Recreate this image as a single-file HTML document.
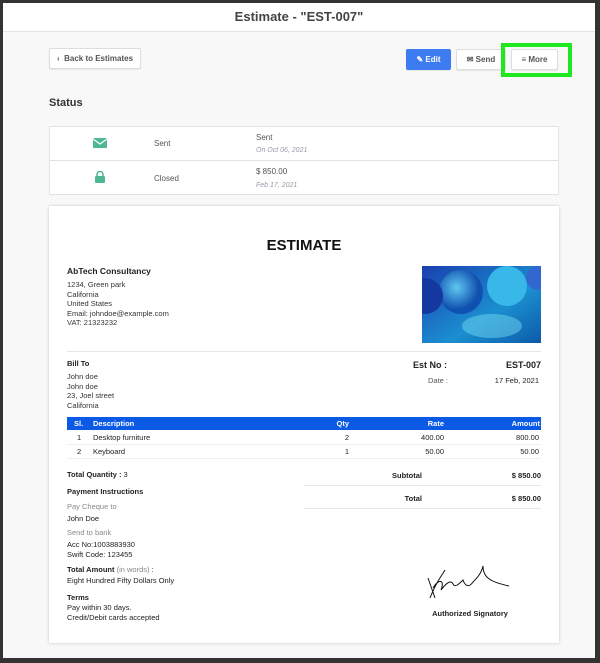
<!DOCTYPE html>
<html><head><style>
*{margin:0;padding:0;box-sizing:border-box}
body{width:600px;height:663px;background:#333;position:relative;overflow:hidden;font-family:"Liberation Sans",sans-serif;color:#222}
.a{position:absolute}
#page{left:3px;top:3px;width:592px;height:655px;background:#f8f8f8}
#hdr{left:3px;top:3px;width:592px;height:29px;background:#fff;border-bottom:1px solid #e2e2e2;text-align:center;font-size:13px;font-weight:bold;color:#444;line-height:27px}
.btn{background:#fff;border:1px solid #ddd;border-radius:2px;font-size:8px;font-weight:bold;color:#555;text-align:center;line-height:19px;box-shadow:0 1px 1px rgba(0,0,0,.08)}
.t{font-size:7.5px;white-space:nowrap}
.b{font-weight:bold}
.g{color:#888}
</style></head><body>
<div class="a" id="page"></div>
<div class="a" id="hdr">Estimate - "EST-007"</div>
<div class="a btn" style="left:49px;top:48px;width:92px;height:21px">&#8249;&nbsp; Back to Estimates</div>
<div class="a btn" style="left:406px;top:49px;width:45px;height:21px;background:#3d7bf0;border-color:#3d7bf0;color:#fff">&#9998; Edit</div>
<div class="a btn" style="left:456px;top:49px;width:50px;height:21px">&#9993; Send</div>
<div class="a" style="left:501px;top:43px;width:71px;height:34px;border:4px solid #1ee81e"></div>
<div class="a btn" style="left:511px;top:49px;width:47px;height:21px">&#8801; More</div>
<div class="a b" style="left:49px;top:97px;font-size:11px;color:#333">Status</div>
<div class="a" style="left:49px;top:126px;width:510px;height:69px;background:#fff;border:1px solid #e2e2e2"></div>
<div class="a" style="left:49px;top:160px;width:510px;height:1px;background:#e2e2e2"></div>
<svg class="a" style="left:93px;top:138px" width="14" height="10"><rect width="14" height="10" rx="1" fill="#4db891"/><path d="M0 1 L7 6 L14 1" stroke="#fff" stroke-width="1.2" fill="none"/></svg>
<svg class="a" style="left:95px;top:171px" width="10" height="12"><path d="M2 5 V3.5 a3 3 0 0 1 6 0 V5" stroke="#4db891" stroke-width="1.5" fill="none"/><rect y="5" width="10" height="7" rx="1" fill="#4db891"/></svg>
<div class="a t" style="left:154px;top:139px;color:#555;font-size:8px">Sent</div>
<div class="a t" style="left:154px;top:174px;color:#555;font-size:8px">Closed</div>
<div class="a t" style="left:256px;top:133px;color:#555;font-size:8px">Sent</div>
<div class="a t" style="left:256px;top:147px;color:#99a;font-style:italic;font-size:7px">On Oct 06, 2021</div>
<div class="a t" style="left:256px;top:167px;color:#555;font-size:8px">$ 850.00</div>
<div class="a t" style="left:256px;top:182px;color:#99a;font-style:italic;font-size:7px">Feb 17, 2021</div>

<div class="a" style="left:49px;top:206px;width:510px;height:437px;background:#fff;box-shadow:0 0 3px rgba(0,0,0,.2)"></div>
<div class="a b" style="left:49px;top:237px;width:510px;text-align:center;font-size:15px;color:#111">ESTIMATE</div>
<div class="a t b" style="left:67px;top:266px;font-size:8.5px">AbTech Consultancy</div>
<div class="a t" style="left:67px;top:280px;line-height:9.5px;color:#333">1234, Green park<br>California<br>United States<br>Email: johndoe@example.com<br>VAT: 21323232</div>
<svg class="a" style="left:422px;top:266px" width="119" height="77"><defs><radialGradient id="b1" cx=".4" cy=".4"><stop offset="0" stop-color="#5fc8f0"/><stop offset="1" stop-color="#1050b0"/></radialGradient><linearGradient id="bg" x1="0" y1="0" x2="1" y2="1"><stop offset="0" stop-color="#1a3fb0"/><stop offset=".6" stop-color="#1b8fd0"/><stop offset="1" stop-color="#0d5aa8"/></linearGradient></defs><rect width="119" height="77" fill="url(#bg)"/><ellipse cx="70" cy="60" rx="30" ry="12" fill="#6fd6f0" opacity=".5"/><circle cx="39" cy="26" r="22" fill="url(#b1)"/><circle cx="85" cy="20" r="20" fill="#38b8e8"/><circle cx="116" cy="12" r="12" fill="#3068d0"/><circle cx="3" cy="30" r="18" fill="#1438a0"/></svg>
<div class="a" style="left:67px;top:351px;width:474px;height:1px;background:#e6e6e6"></div>
<div class="a t b" style="left:67px;top:359px">Bill To</div>
<div class="a t" style="left:67px;top:372px;line-height:9.5px;color:#333">John doe<br>John doe<br>23, Joel street<br>California</div>
<div class="a t b" style="left:413px;top:360px;font-size:9px">Est No :</div>
<div class="a t b" style="left:450px;top:360px;width:91px;font-size:9px;text-align:right">EST-007</div>
<div class="a t" style="left:428px;top:376px;color:#555">Date :</div>
<div class="a t" style="left:450px;top:376px;width:89px;text-align:right">17 Feb, 2021</div>
<div class="a" style="left:67px;top:417px;width:474px;height:13px;background:#0a5ae6"></div>
<div class="a t b" style="left:74px;top:419px;color:#fff">Sl.</div>
<div class="a t b" style="left:93px;top:419px;color:#fff">Description</div>
<div class="a t b" style="left:300px;top:419px;width:49px;text-align:right;color:#fff">Qty</div>
<div class="a t b" style="left:380px;top:419px;width:64px;text-align:right;color:#fff">Rate</div>
<div class="a t b" style="left:480px;top:419px;width:60px;text-align:right;color:#fff">Amount</div>
<div class="a t" style="left:77px;top:433px">1</div><div class="a t" style="left:93px;top:433px">Desktop furniture</div>
<div class="a t" style="left:300px;top:433px;width:49px;text-align:right">2</div>
<div class="a t" style="left:380px;top:433px;width:64px;text-align:right">400.00</div>
<div class="a t" style="left:480px;top:433px;width:59px;text-align:right">800.00</div>
<div class="a" style="left:67px;top:444px;width:474px;height:1px;background:#eee"></div>
<div class="a t" style="left:77px;top:447px">2</div><div class="a t" style="left:93px;top:447px">Keyboard</div>
<div class="a t" style="left:300px;top:447px;width:49px;text-align:right">1</div>
<div class="a t" style="left:380px;top:447px;width:64px;text-align:right">50.00</div>
<div class="a t" style="left:480px;top:447px;width:59px;text-align:right">50.00</div>
<div class="a" style="left:67px;top:458px;width:474px;height:1px;background:#eee"></div>

<div class="a t" style="left:67px;top:470px"><b>Total Quantity :</b> 3</div>
<div class="a t b" style="left:67px;top:487px">Payment Instructions</div>
<div class="a t g" style="left:67px;top:502px">Pay Cheque to</div>
<div class="a t" style="left:67px;top:514px">John Doe</div>
<div class="a t g" style="left:67px;top:528px">Send to bank</div>
<div class="a t" style="left:67px;top:540px;line-height:9.5px">Acc No:1003883930<br>Swift Code: 123455</div>
<div class="a t" style="left:67px;top:565px"><b>Total Amount</b> <span class="g">(in words)</span> :</div>
<div class="a t" style="left:67px;top:576px">Eight Hundred Fifty Dollars Only</div>
<div class="a t b" style="left:67px;top:593px">Terms</div>
<div class="a t" style="left:67px;top:603px;line-height:9.5px">Pay within 30 days.<br>Credit/Debit cards accepted</div>

<div class="a t b" style="left:300px;top:471px;width:122px;text-align:right">Subtotal</div>
<div class="a t b" style="left:460px;top:471px;width:81px;text-align:right">$ 850.00</div>
<div class="a" style="left:304px;top:485px;width:237px;height:1px;background:#e6e6e6"></div>
<div class="a t b" style="left:300px;top:494px;width:122px;text-align:right">Total</div>
<div class="a t b" style="left:460px;top:494px;width:81px;text-align:right">$ 850.00</div>
<div class="a" style="left:304px;top:508px;width:237px;height:1px;background:#e6e6e6"></div>
<svg class="a" style="left:425px;top:560px" width="90" height="40"><path d="M3 18 L10 38 M5 38 C12 20 18 14 20 10 M8 28 C14 18 20 20 16 30 C22 22 26 20 28 24 C30 28 34 24 38 20 C40 26 44 28 48 22 C52 18 56 14 58 6 C58 18 66 22 84 26" stroke="#111" stroke-width="1" fill="none"/></svg>
<div class="a t b" style="left:420px;top:609px;width:100px;text-align:center">Authorized Signatory</div>
</body></html>
